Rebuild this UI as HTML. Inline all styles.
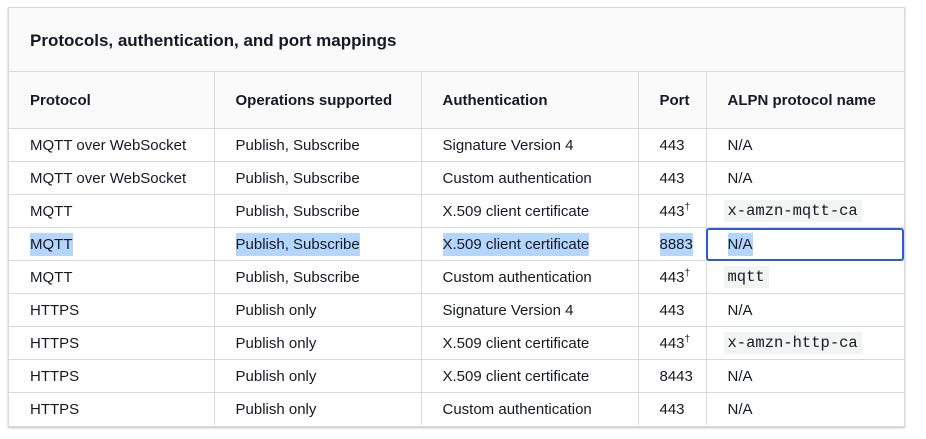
<!DOCTYPE html>
<html><head><style>
body{margin:0;background:#fff;font-family:"Liberation Sans",sans-serif;color:#16191f;}
.wrap{position:absolute;left:8px;top:7px;width:895px;height:418px;border:1px solid #d5dbdb;box-shadow:0 1px 2px rgba(0,0,0,.25);background:#fff;}
.title{height:63px;background:#fafafa;border-bottom:1px solid #d5dbdb;font-weight:bold;font-size:17px;line-height:66px;padding-left:21px;}
table{border-collapse:collapse;table-layout:fixed;width:895px;font-size:15px;}
td,th{border-left:1px solid #d5dbdb;border-bottom:1px solid #d5dbdb;padding:0 0 0 21px;text-align:left;white-space:nowrap;}
td:first-child,th:first-child{border-left:none;}
th{height:56px;background:#fafafa;font-weight:bold;}
td{height:32px;}
tr:last-child td{border-bottom:none;}
code{font-family:"Liberation Mono",monospace;background:#f2f3f3;padding:2px 4px;font-size:15.5px;margin-left:-4px}
sup{font-size:10px;vertical-align:6px;}
.sel span{background:#b4d5fe;padding:3px 0;}
.foc{outline:2px solid #2c5ad8;outline-offset:-2px;border-radius:3px;}
</style></head><body>
<div class="wrap">
<div class="title">Protocols, authentication, and port mappings</div>
<table>
<colgroup><col style="width:205px"><col style="width:207px"><col style="width:217px"><col style="width:68px"><col></colgroup>
<tr><th>Protocol</th><th>Operations supported</th><th>Authentication</th><th>Port</th><th>ALPN protocol name</th></tr>
<tr><td>MQTT over WebSocket</td><td>Publish, Subscribe</td><td>Signature Version 4</td><td>443</td><td>N/A</td></tr>
<tr><td>MQTT over WebSocket</td><td>Publish, Subscribe</td><td>Custom authentication</td><td>443</td><td>N/A</td></tr>
<tr><td>MQTT</td><td>Publish, Subscribe</td><td>X.509 client certificate</td><td>443<sup>†</sup></td><td><code>x-amzn-mqtt-ca</code></td></tr>
<tr class="sel"><td><span>MQTT</span></td><td><span>Publish, Subscribe</span></td><td><span>X.509 client certificate</span></td><td><span>8883</span></td><td class="foc"><span>N/A</span></td></tr>
<tr><td>MQTT</td><td>Publish, Subscribe</td><td>Custom authentication</td><td>443<sup>†</sup></td><td><code>mqtt</code></td></tr>
<tr><td>HTTPS</td><td>Publish only</td><td>Signature Version 4</td><td>443</td><td>N/A</td></tr>
<tr><td>HTTPS</td><td>Publish only</td><td>X.509 client certificate</td><td>443<sup>†</sup></td><td><code>x-amzn-http-ca</code></td></tr>
<tr><td>HTTPS</td><td>Publish only</td><td>X.509 client certificate</td><td>8443</td><td>N/A</td></tr>
<tr><td>HTTPS</td><td>Publish only</td><td>Custom authentication</td><td>443</td><td>N/A</td></tr>
</table>
</div>
</body></html>
